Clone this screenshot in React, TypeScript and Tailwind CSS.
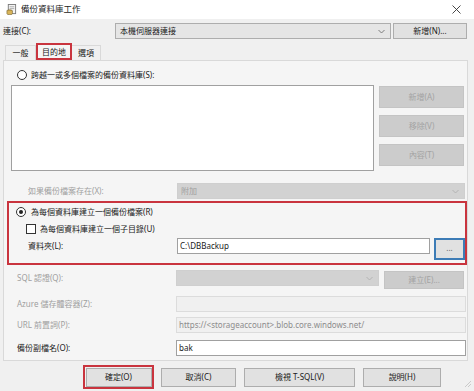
import React from 'react';

type BtnProps = {
  label: string;
  className?: string;
  disabled?: boolean;
};

function Btn({ label, className = '', disabled }: BtnProps) {
  return (
    <div
      className={`flex items-center justify-center border ${
        disabled ? 'border-[#c4c4c4] bg-[#cccccc] text-[#a3a3a3]' : 'border-[#adadad] bg-[#e1e1e1] text-[#1a1a1a]'
      } ${className}`}
    >
      {label}
    </div>
  );
}

function Chevron({ color = '#606060' }: { color?: string }) {
  return (
    <svg width="7" height="5" viewBox="0 0 7 5" className="shrink-0">
      <path d="M0.5 1 L3.5 4 L6.5 1" fill="none" stroke={color} strokeWidth="0.9" />
    </svg>
  );
}

type ComboProps = {
  text?: string;
  disabled?: boolean;
  className?: string;
};

function Combo({ text = '', disabled, className = '' }: ComboProps) {
  return (
    <div
      className={`flex h-[16px] items-center border pl-[3px] pr-[5px] ${
        disabled ? 'border-[#cfcfcf] bg-[#d2d2d2] text-[#a0a0a0]' : 'border-[#adadad] bg-[#e5e5e5] text-[#1a1a1a]'
      } ${className}`}
    >
      <span className="flex-1">{text}</span>
      <Chevron color={disabled ? '#b0b0b0' : '#707070'} />
    </div>
  );
}

function Radio({ checked }: { checked?: boolean }) {
  return (
    <div className="flex h-[10px] w-[10px] shrink-0 items-center justify-center rounded-full border border-[#333333] bg-white">
      {checked && <div className="h-[4px] w-[4px] rounded-full bg-[#222222]" />}
    </div>
  );
}

function Field({ text = '', disabled, muted, className = '' }: { text?: string; disabled?: boolean; muted?: boolean; className?: string }) {
  return (
    <div
      className={`flex h-[16px] items-center border px-[2px] ${
        disabled ? 'border-[#dcdcdc] bg-[#f0f0f0]' : 'border-[#a0a0a0] bg-white'
      } ${muted ? 'text-[#8c8c8c]' : 'text-[#1a1a1a]'} ${className}`}
    >
      {text}
    </div>
  );
}

export default function App() {
  return (
    <div className="h-[391px] w-[474px] overflow-hidden bg-[#f0f0f0] font-['Noto_Sans','Noto_Sans_CJK_TC',sans-serif] text-[8px] leading-none text-[#1a1a1a]">
      {/* title bar */}
      <div className="flex h-[19px] items-center bg-white pl-[6px] pr-[13px]">
        <svg width="11" height="11" viewBox="0 0 12 12">
          <rect x="2.5" y="0.5" width="8" height="10" fill="#f4f4f4" stroke="#7a7a7a" />
          <path d="M4 3 H9 M4 5 H9" stroke="#9a9a9a" strokeWidth="0.8" />
          <ellipse cx="4" cy="7.5" rx="3" ry="1.2" fill="#c9a44a" stroke="#6b5a2a" strokeWidth="0.6" />
          <path d="M1 7.5 V10.5 A3 1.2 0 0 0 7 10.5 V7.5" fill="#d8b45a" stroke="#6b5a2a" strokeWidth="0.6" />
        </svg>
        <span className="ml-[4px] text-[8.5px] text-[#222222]">備份資料庫工作</span>
        <svg width="9" height="9" viewBox="0 0 9 9" className="ml-auto">
          <path d="M0.5 0.5 L8.5 8.5 M8.5 0.5 L0.5 8.5" stroke="#333333" strokeWidth="0.9" />
        </svg>
      </div>

      {/* connection row */}
      <div className="mt-[4px] flex h-[16px] items-center">
        <div className="w-[115px] pl-[3px]">連接(C):</div>
        <Combo text="本機伺服器連接" className="w-[276px] pl-[4px]" />
        <Btn label="新增(N)..." className="ml-[2px] h-[16px] w-[74px]" />
      </div>

      {/* tabs */}
      <div className="mt-[4px] flex h-[17px] items-end pl-[5px]">
        <div className="flex h-[15px] w-[31px] items-center justify-center border border-b-0 border-[#d9d9d9]">一般</div>
        <div className="flex h-[17px] w-[36px] items-center justify-center border-2 border-[#c9343e] bg-[#f5f5f5]">目的地</div>
        <div className="flex h-[15px] w-[29px] items-center justify-center border border-b-0 border-l-0 border-[#d9d9d9]">選項</div>
      </div>

      {/* tab panel */}
      <div className="ml-[3px] flex h-[301px] w-[465px] flex-col border border-[#d9d9d9] bg-[#f5f5f5]">
        <div className="mt-[7px] flex h-[14px] items-center pl-[13px]">
          <Radio />
          <span className="ml-[4px]">跨越一或多個檔案的備份資料庫(S):</span>
        </div>

        <div className="mt-[3px] flex">
          <div className="ml-[7px] h-[86px] w-[363px] border border-[#a0a0a0] bg-white" />
          <div className="ml-[5px] flex w-[85px] flex-col gap-[7px] pt-[1px]">
            <Btn label="新增(A)" disabled className="h-[22px]" />
            <Btn label="移除(V)" disabled className="h-[22px]" />
            <Btn label="內容(T)" disabled className="h-[22px]" />
          </div>
        </div>

        <div className="mt-[12px] flex h-[16px] items-center">
          <div className="w-[173px] pl-[24px] text-[#a0a0a0]">如果備份檔案存在(X):</div>
          <Combo text="附加" disabled className="w-[288px]" />
        </div>

        {/* highlighted destination box */}
        <div className="ml-[3px] mt-[2px] flex h-[64px] w-[460px] flex-col border-2 border-[#c9343e]">
          <div className="mt-[3px] flex h-[12px] items-center pl-[7px]">
            <Radio checked />
            <span className="ml-[5px]">為每個資料庫建立一個備份檔案(R)</span>
          </div>
          <div className="mt-[5px] flex h-[12px] items-center pl-[17px]">
            <div className="h-[10px] w-[10px] border border-[#333333] bg-white" />
            <span className="ml-[4px]">為每個資料庫建立一個子目錄(U)</span>
          </div>
          <div className="mt-[3px] flex items-start">
            <div className="flex h-[16px] w-[168px] items-center pl-[19px]">資料夾(L):</div>
            <Field text="C:\DBBackup" className="w-[253px]" />
            <div className="ml-[4px] flex h-[22px] w-[31px] items-center justify-center border-2 border-[#3d7cb6] bg-[#e1e1e1] pb-[3px] text-[#666666]">
              ...
            </div>
          </div>
        </div>

        <div className="mt-[5px] flex h-[19px] items-start">
          <div className="flex h-[16px] w-[172px] items-center pl-[13px] text-[#a0a0a0]">SQL 認證(Q):</div>
          <Combo disabled className="w-[203px]" />
          <Btn label="建立(E)..." disabled className="ml-[5px] mt-[1px] h-[18px] w-[80px]" />
        </div>

        <div className="mt-[7px] flex items-center">
          <div className="w-[172px] pl-[13px] text-[#a0a0a0]">Azure 儲存體容器(Z):</div>
          <Field disabled className="w-[290px]" />
        </div>

        <div className="mt-[5px] flex items-center">
          <div className="w-[172px] pl-[13px] text-[#a0a0a0]">URL 前置詞(P):</div>
          <Field disabled muted text="https://<storageaccount>.blob.core.windows.net/" className="w-[290px]" />
        </div>

        <div className="mt-[7px] flex items-center">
          <div className="w-[172px] pl-[13px]">備份副檔名(O):</div>
          <Field text="bak" className="w-[290px]" />
        </div>
      </div>

      {/* footer buttons */}
      <div className="mt-[4px] flex items-center">
        <div className="ml-[83px] flex h-[24px] w-[71px] items-center justify-center border-2 border-[#c9343e]">
          <Btn label="確定(O)" className="h-[19px] w-[66px]" />
        </div>
        <Btn label="取消(C)" className="ml-[7px] h-[19px] w-[75px]" />
        <Btn label="檢視 T-SQL(V)" className="ml-[8px] h-[19px] w-[111px]" />
        <Btn label="說明(H)" className="ml-[8px] h-[19px] w-[78px]" />
        <svg width="8" height="8" viewBox="0 0 8 8" className="ml-auto mr-[2px] mt-[14px]">
          <path d="M7 1 L1 7 M7 4 L4 7" stroke="#c0c0c0" strokeWidth="0.8" />
        </svg>
      </div>
    </div>
  );
}
